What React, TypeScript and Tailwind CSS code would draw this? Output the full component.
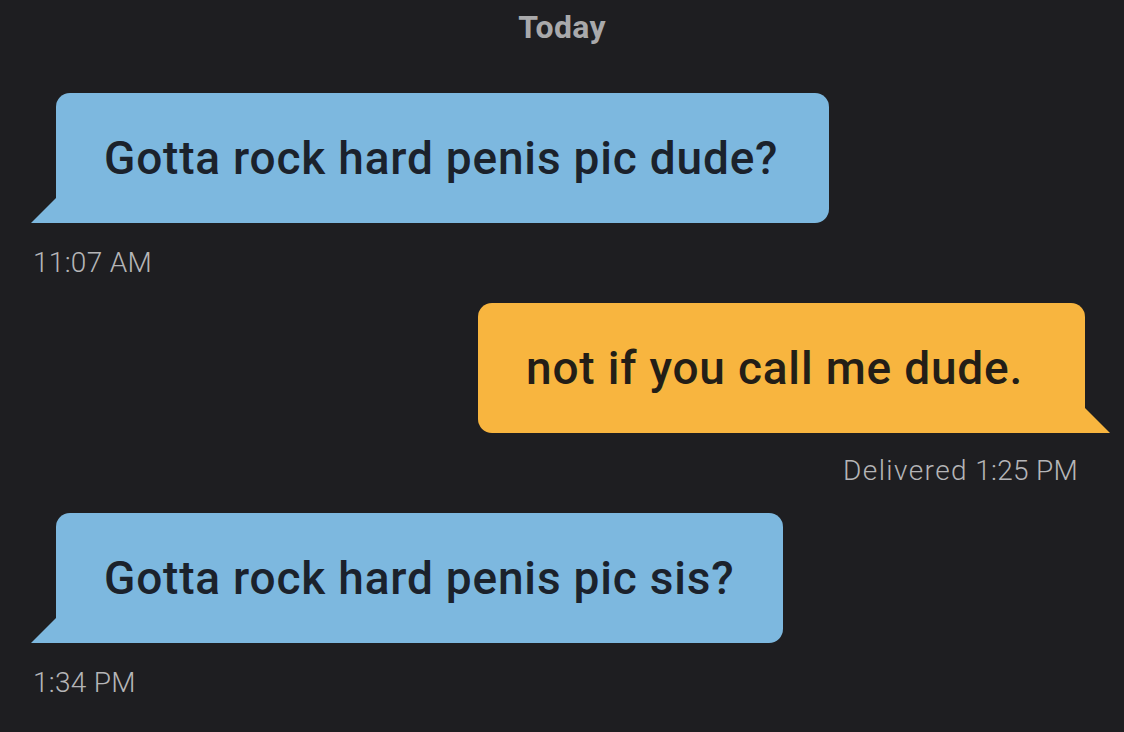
import React from "react"

type Msg = {
  text: string
  side: "in" | "out"
  width: string
}

const messages: Msg[] = [
  { text: "Gotta rock hard penis pic dude?", side: "in", width: "w-[773px]" },
  { text: "not if you call me dude.", side: "out", width: "w-[607px]" },
  { text: "Gotta rock hard penis pic sis?", side: "in", width: "w-[727px]" },
]

function Bubble({ msg }: { msg: Msg }) {
  const incoming = msg.side === "in"
  return (
    <div className={`relative ${msg.width} ${incoming ? "bg-[#7db8df] rounded-[14px] rounded-bl-none text-[#1b222c]" : "bg-[#f8b53f] rounded-[14px] rounded-br-none text-[#231e17]"}`}>
      <div className="pl-12 pr-10 py-[37px] text-[46px] leading-[56px] font-medium tracking-[0.8px] whitespace-nowrap">
        {msg.text}
      </div>
      {incoming ? (
        <svg className="absolute left-[-25px] bottom-0" width="25" height="25" viewBox="0 0 25 25">
          <polygon points="25,0 0,25 25,25" fill="#7db8df" />
        </svg>
      ) : (
        <svg className="absolute right-[-25px] bottom-0" width="25" height="25" viewBox="0 0 25 25">
          <polygon points="0,0 25,25 0,25" fill="#f8b53f" />
        </svg>
      )}
    </div>
  )
}

export default function App() {
  return (
    <div
      className="min-h-[732px] w-full bg-[#1e1e21] overflow-hidden"
      style={{ fontFamily: "Roboto, 'Liberation Sans', sans-serif" }}
    >
      <div className="pt-[7px] text-center text-[32px] leading-[40px] font-bold text-[#a9a9ab] tracking-[0.3px]">
        Today
      </div>

      <div className="mt-[46px] ml-[56px]">
        <Bubble msg={messages[0]} />
      </div>
      <div className="mt-6 ml-[33px] text-[28px] leading-8 font-light text-[#b5b5b7] tracking-[0.3px]">
        11:07 AM
      </div>

      <div className="mt-6 flex justify-end mr-[39px]">
        <Bubble msg={messages[1]} />
      </div>
      <div className="mt-[22px] mr-[46px] text-right text-[28px] leading-8 font-light text-[#b5b5b7] tracking-[0.3px]">
        <span className="tracking-[1.4px]">Delivered</span> 1:25 PM
      </div>

      <div className="mt-[26px] ml-[56px]">
        <Bubble msg={messages[2]} />
      </div>
      <div className="mt-6 ml-[33px] text-[28px] leading-8 font-light text-[#b5b5b7] tracking-[0.3px]">
        1:34 PM
      </div>
    </div>
  )
}
